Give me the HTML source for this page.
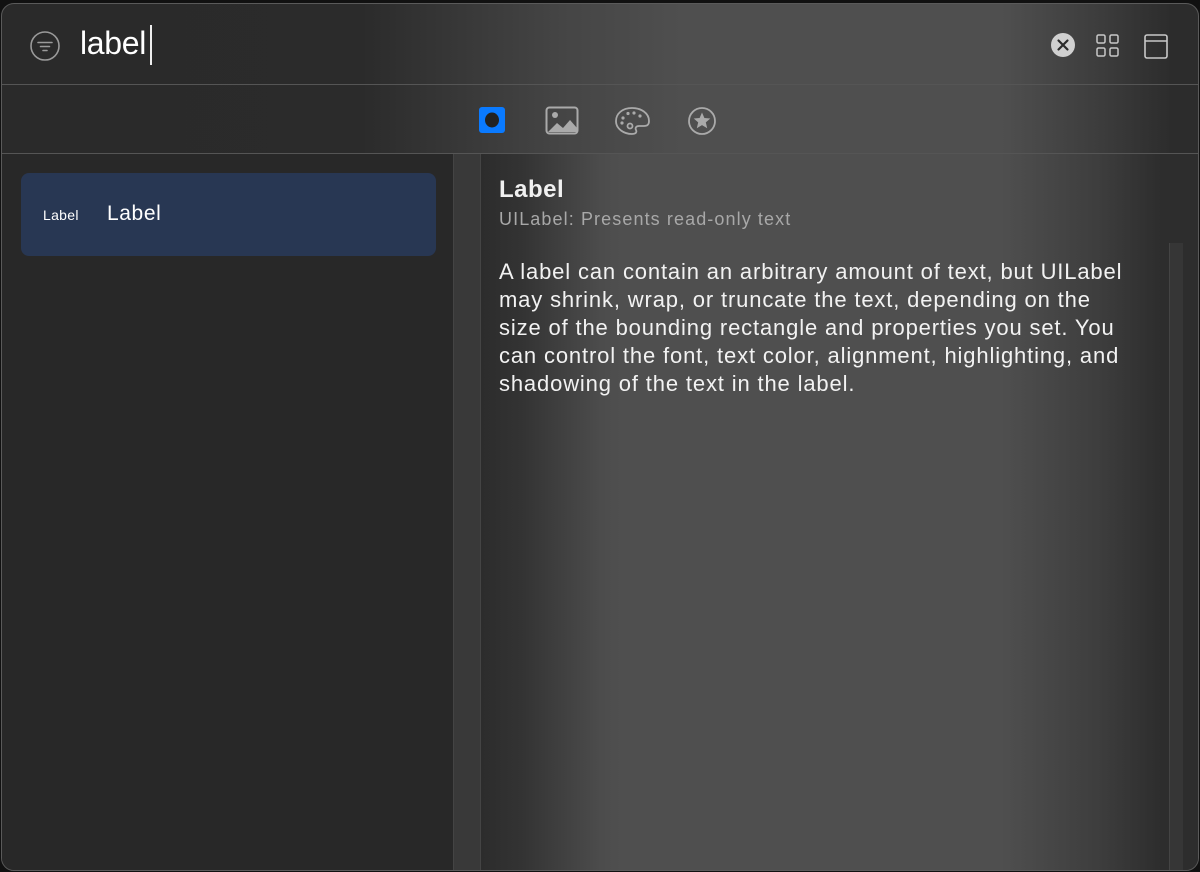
<!DOCTYPE html>
<html><head><meta charset="utf-8"><style>
*{margin:0;padding:0;box-sizing:border-box}
body{width:1200px;height:872px;background:#111;overflow:hidden;font-family:"Liberation Sans",sans-serif;position:relative}
.win{position:absolute;left:1px;top:3px;width:1198px;height:868px;border-radius:13px;border:1px solid #5a5a5a;overflow:hidden;
background:linear-gradient(90deg,#2a2a2a 0px,#2b2b2b 360px,#454545 560px,#4f4f4f 680px,#4f4f4f 1000px,#3c3c3c 1100px,#2c2c2c 1170px,#2c2c2c 1200px)}
.hdr1{position:absolute;left:0;top:0;right:0;height:81px;border-bottom:1px solid #555}
.hdr2{position:absolute;left:0;top:81px;right:0;height:69px;border-bottom:1px solid #555}
.left{position:absolute;left:0;top:150px;width:451px;bottom:0;background:#282828}
.div{position:absolute;left:451px;top:150px;width:28px;bottom:0;background:#393939;border-left:1px solid #444;border-right:1px solid #444}
.detail{position:absolute;left:479px;top:150px;right:0;bottom:0;background:linear-gradient(90deg,#2c2c2c 0px,#333 40px,#4c4c4c 120px,#4f4f4f 140px,#4f4f4f 520px,#3d3d3d 620px,#2d2d2d 680px)}
.sb{position:absolute;left:1167px;top:239px;width:14px;bottom:0;background:#363636;border-left:1px solid #444}
.card{position:absolute;left:19px;top:169px;width:415px;height:83px;background:#283753;border-radius:8px}
</style></head><body>
<div class="win">
<div class="hdr1"></div><div class="hdr2"></div>
<div class="left"></div><div class="div"></div><div class="detail"></div><div class="sb"></div>
<div class="card"></div>
<svg style="position:absolute;left:27px;top:26px" width="32" height="32" viewBox="0 0 32 32"><circle cx="16" cy="16" r="14" fill="none" stroke="#9a9a9a" stroke-width="1.6"/><path d="M9 12.5h14M11.5 16.5h9M14 20.5h4" stroke="#9a9a9a" stroke-width="1.6" stroke-linecap="round"/></svg>
<div style="position:absolute;left:78px;top:21px;font-size:32px;color:#fff;letter-spacing:-0.3px">label</div>
<div style="position:absolute;left:148px;top:21px;width:2px;height:40px;background:#eee"></div>
<svg style="position:absolute;left:1048px;top:28px" width="26" height="26" viewBox="0 0 26 26"><circle cx="13" cy="13" r="12" fill="#d0d0d0"/><path d="M8.5 8.5l9 9M17.5 8.5l-9 9" stroke="#2a2a2a" stroke-width="2.2" stroke-linecap="round"/></svg>
<svg style="position:absolute;left:1093px;top:29px" width="26" height="26" viewBox="0 0 26 26" fill="none" stroke="#c8c8c8" stroke-width="1.5"><rect x="2" y="2" width="8" height="8" rx="1.5"/><rect x="15" y="2" width="8" height="8" rx="1.5"/><rect x="2" y="15" width="8" height="8" rx="1.5"/><rect x="15" y="15" width="8" height="8" rx="1.5"/></svg>
<svg style="position:absolute;left:1141px;top:29px" width="26" height="27" viewBox="0 0 26 27" fill="none" stroke="#c8c8c8" stroke-width="1.6"><rect x="2" y="2" width="22" height="23" rx="2"/><path d="M2 8h22"/></svg>
<svg style="position:absolute;left:476px;top:102px" width="28" height="28" viewBox="0 0 28 28"><rect x="1" y="1" width="26" height="26" rx="3" fill="#0a7aff"/><ellipse cx="14" cy="14" rx="7" ry="7.5" fill="#222"/></svg>
<svg style="position:absolute;left:543px;top:102px" width="34" height="30" viewBox="0 0 34 30"><rect x="1.5" y="1.5" width="31" height="26" rx="3" fill="none" stroke="#aaa" stroke-width="2"/><circle cx="10" cy="9" r="3" fill="#aaa"/><path d="M3 26l9-9 6 5 7-8 7 8v4z" fill="#aaa"/></svg>
<svg style="position:absolute;left:612px;top:102px" width="36" height="30" viewBox="0 0 36 30" fill="none" stroke="#aaa" stroke-width="1.8"><path d="M18 2C8 2 2 8 2 15c0 8 8 13 16 13 4 0 5-2 4-4-1-2 0-4 3-4h5c4 0 5-2 5-5C35 7 27 2 18 2z"/><circle cx="16" cy="20" r="2.5"/><circle cx="9" cy="12" r="1.6" fill="#aaa" stroke="none"/><circle cx="14" cy="7.5" r="1.6" fill="#aaa" stroke="none"/><circle cx="20" cy="7" r="1.6" fill="#aaa" stroke="none"/><circle cx="26" cy="10" r="1.6" fill="#aaa" stroke="none"/><circle cx="8" cy="17" r="1.6" fill="#aaa" stroke="none"/></svg>
<svg style="position:absolute;left:685px;top:102px" width="30" height="30" viewBox="0 0 30 30"><circle cx="15" cy="15" r="13" fill="none" stroke="#aaa" stroke-width="1.8"/><path d="M15 6.5l2.4 5.5 5.9.5-4.5 3.9 1.4 5.8-5.2-3.1-5.2 3.1 1.4-5.8-4.5-3.9 5.9-.5z" fill="#aaa"/></svg>
<div style="position:absolute;left:41px;top:203px;font-size:14px;color:#fff;letter-spacing:0.3px">Label</div>
<div style="position:absolute;left:105px;top:198px;font-size:21px;color:#fff;letter-spacing:0.6px">Label</div>
<div style="position:absolute;left:497px;top:172px;font-size:24px;font-weight:bold;color:#f0f0f0;letter-spacing:0.5px">Label</div>
<div style="position:absolute;left:497px;top:205px;font-size:18px;color:#a8a8a8;letter-spacing:1.1px">UILabel: Presents read-only text</div>
<div style="position:absolute;left:497px;top:254px;font-size:22px;line-height:28px;color:#f2f2f2;white-space:nowrap;letter-spacing:0.85px">A label can contain an arbitrary amount of text, but UILabel<br>may shrink, wrap, or truncate the text, depending on the<br>size of the bounding rectangle and properties you set. You<br>can control the font, text color, alignment, highlighting, and<br>shadowing of the text in the label.</div>
</div>
</body></html>
